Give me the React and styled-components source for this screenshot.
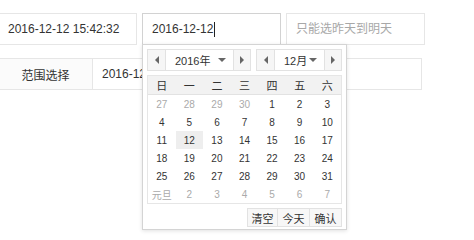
import React from "react";
import styled, { createGlobalStyle, css } from "styled-components";

const Global = createGlobalStyle`
  html, body { margin: 0; padding: 0; background: #fff; }
  html, body, #root { min-height: 100vh; }
  body { font-family: "Liberation Sans", "Noto Sans CJK SC", Arial, sans-serif; color: #333; }
  * { box-sizing: border-box; }
`;

const Page = styled.div`
  display: flex;
  flex-direction: column;
  gap: 13px;
  padding-top: 13px;
  margin-left: -2px;
  min-height: 240px;
`;

const Row = styled.div`
  display: flex;
  gap: 5px;
`;

const Wrap = styled.div`
  position: relative;
`;

const Input = styled.div`
  width: ${(p) => p.$w || 139}px;
  height: 32px;
  border: 1px solid ${(p) => (p.$focus ? "#d2d2d2" : "#e6e6e6")};
  ${(p) => p.$joined && css`border-left: none;`}
  padding: 0 9px;
  font-size: 12px;
  line-height: 30px;
  color: ${(p) => (p.$placeholder ? "#a8a8a8" : "#333")};
  white-space: nowrap;
  overflow: hidden;
  display: flex;
  align-items: center;
  background: #fff;
`;

const Caret = styled.span`
  display: inline-block;
  width: 1px;
  height: 15px;
  background: #222;
  margin-left: 1px;
`;

const Joined = styled.div`
  display: flex;
`;

const Label = styled.div`
  width: 95px;
  height: 32px;
  border: 1px solid #e6e6e6;
  background: #fbfbfb;
  font-size: 12px;
  display: flex;
  align-items: center;
  justify-content: center;
  color: #333;
`;

const Popup = styled.div`
  position: absolute;
  top: 31px;
  left: 0;
  width: 205px;
  height: 186px;
  border: 1px solid #d4d4d4;
  background: #fff;
  padding: 4px;
  box-shadow: 0 1px 4px rgba(0, 0, 0, 0.12);
  z-index: 10;
  display: flex;
  flex-direction: column;
  gap: 4px;
`;

const Header = styled.div`
  display: flex;
  gap: 5px;
  height: 22px;
`;

const SelectBox = styled.div`
  width: ${(p) => p.$w}px;
  height: 22px;
  border: 1px solid #e2e2e2;
  display: flex;
`;

const ArrowBtn = styled.div`
  width: ${(p) => p.$w}px;
  background: #f6f6f6;
  display: flex;
  align-items: center;
  justify-content: center;
  ${(p) => (p.$side === "left" ? "border-right: 1px solid #e2e2e2;" : "border-left: 1px solid #e2e2e2;")}
  &::after {
    content: "";
    width: 0;
    height: 0;
    border-top: 4px solid transparent;
    border-bottom: 4px solid transparent;
    ${(p) =>
      p.$side === "left"
        ? "border-right: 4px solid #666;"
        : "border-left: 4px solid #666;"}
  }
`;

const SelectText = styled.div`
  flex: 1;
  display: flex;
  align-items: center;
  justify-content: space-between;
  padding: 0 7px 0 9px;
  font-size: 11px;
  color: #333;
  background: #fff;
  &::after {
    content: "";
    width: 0;
    height: 0;
    border-left: 4px solid transparent;
    border-right: 4px solid transparent;
    border-top: 4px solid #666;
  }
`;

const Table = styled.div`
  border: 1px solid #e6e6e6;
  display: grid;
  grid-template-columns: repeat(7, 1fr);
`;

const WeekCell = styled.div`
  height: 19px;
  background: #f2f2f2;
  border-bottom: 1px solid #e2e2e2;
  display: flex;
  align-items: center;
  justify-content: center;
  font-size: 11px;
  color: #333;
`;

const DayCell = styled.div`
  height: 18px;
  display: flex;
  align-items: center;
  justify-content: center;
  font-size: 10px;
  color: ${(p) => (p.$other ? "#aaa" : "#333")};
  background: ${(p) => (p.$active ? "#eeeeee" : "transparent")};
`;

const Footer = styled.div`
  display: flex;
  justify-content: flex-end;
`;

const Btn = styled.div`
  width: ${(p) => p.$w}px;
  height: 19px;
  border: 1px solid #e2e2e2;
  background: #f7f7f7;
  font-size: 11px;
  display: flex;
  align-items: center;
  justify-content: center;
  color: #333;
  & + & { border-left: none; }
`;

const weeks = ["日", "一", "二", "三", "四", "五", "六"];

const days = [
  ["27", 1], ["28", 1], ["29", 1], ["30", 1], ["1"], ["2"], ["3"],
  ["4"], ["5"], ["6"], ["7"], ["8"], ["9"], ["10"],
  ["11"], ["12", 0, 1], ["13"], ["14"], ["15"], ["16"], ["17"],
  ["18"], ["19"], ["20"], ["21"], ["22"], ["23"], ["24"],
  ["25"], ["26"], ["27"], ["28"], ["29"], ["30"], ["31"],
  ["元旦", 1], ["2", 1], ["3", 1], ["4", 1], ["5", 1], ["6", 1], ["7", 1],
];

export default function App() {
  return (
    <>
      <Global />
      <Page>
        <Row>
          <Input>2016-12-12 15:42:32</Input>
          <Wrap>
            <Input $focus>
              2016-12-12
              <Caret />
            </Input>
            <Popup>
              <Header>
                <SelectBox $w={104}>
                  <ArrowBtn $w={18} $side="left" />
                  <SelectText>2016年</SelectText>
                  <ArrowBtn $w={17} $side="right" />
                </SelectBox>
                <SelectBox $w={86}>
                  <ArrowBtn $w={18} $side="left" />
                  <SelectText>12月</SelectText>
                  <ArrowBtn $w={17} $side="right" />
                </SelectBox>
              </Header>
              <Table>
                {weeks.map((w) => (
                  <WeekCell key={w}>{w}</WeekCell>
                ))}
                {days.map(([d, other, active], i) => (
                  <DayCell key={i} $other={!!other} $active={!!active}>
                    {d}
                  </DayCell>
                ))}
              </Table>
              <Footer>
                <Btn $w={31}>清空</Btn>
                <Btn $w={32}>今天</Btn>
                <Btn $w={32}>确认</Btn>
              </Footer>
            </Popup>
          </Wrap>
          <Input $placeholder>只能选昨天到明天</Input>
        </Row>
        <Joined>
          <Label>范围选择</Label>
          <Input $w={329} $joined>2016-12-12 - 2016-12-12</Input>
        </Joined>
      </Page>
    </>
  );
}
